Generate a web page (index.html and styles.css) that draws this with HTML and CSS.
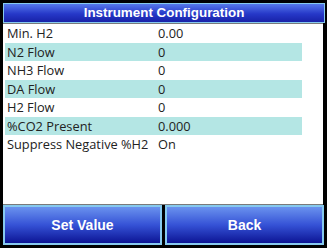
FILE: index.html
```html
<!DOCTYPE html>
<html lang="en">
<head>
  <meta charset="UTF-8">
  <meta name="viewport" content="width=device-width, initial-scale=1.0">
  <title>Instrument Configuration</title>
  <link rel="stylesheet" href="styles.css">
</head>
<body>
  <div class="screen">
    <div class="title-bar">Instrument Configuration</div>

    <!-- settings list -->
    <div class="panel">
      <div class="row"><span class="label">Min. H2</span><span class="value">0.00</span></div>
      <div class="row shaded"><span class="label">N2 Flow</span><span class="value">0</span></div>
      <div class="row"><span class="label">NH3 Flow</span><span class="value">0</span></div>
      <div class="row shaded"><span class="label">DA Flow</span><span class="value">0</span></div>
      <div class="row"><span class="label">H2 Flow</span><span class="value">0</span></div>
      <div class="row shaded"><span class="label">%CO2 Present</span><span class="value">0.000</span></div>
      <div class="row"><span class="label">Suppress Negative %H2</span><span class="value">On</span></div>
    </div>

    <div class="buttons">
      <button class="soft-btn">Set Value</button>
      <button class="soft-btn">Back</button>
    </div>
  </div>
</body>
</html>
```

FILE: styles.css
```css
    body {
      margin: 0;
      background: #000;
      font-family: "Open Sans", Arial, sans-serif;
    }
    .screen {
      width: 327px;
      height: 248px;
      display: flex;
      flex-direction: column;
      padding-top: 3px;
      box-sizing: border-box;
    }
    .title-bar {
      margin: 0 2px 0 3px;
      height: 20px;
      box-sizing: border-box;
      border: 1px solid #86c9ee;
      background: linear-gradient(#5578ea, #2638c8 55%, #1822a8);
      color: #fff;
      font-family: "Liberation Sans", Arial, sans-serif;
      font-weight: bold;
      font-size: 13.4px;
      line-height: 18px;
      text-align: center;
    }
    .panel {
      margin: 0 4px 0 3px;
      height: 180px;
      background: #fff;
      border-top: 1px solid #7a7a7a;
      border-bottom: 1px solid #7a7a7a;
    }
    .row {
      display: flex;
      margin-left: 2px;
      width: 297px;
      height: 18.5px;
      align-items: center;
      font-size: 12.8px;
      color: #222;
    }
    .row.shaded {
      background: #b4e6e4;
    }
    .label {
      width: 151px;
      padding-left: 2px;
    }
    .buttons {
      display: flex;
      gap: 3px;
      margin: 0 3px 0 3px;
      height: 40px;
    }
    .soft-btn {
      flex: 1;
      border: 2px solid #86c9ee;
      background: linear-gradient(#6a92ee, #3552d6 50%, #0c1494);
      color: #fff;
      font-family: "Liberation Sans", Arial, sans-serif;
      font-weight: bold;
      font-size: 14px;
      padding: 0;
    }
```
